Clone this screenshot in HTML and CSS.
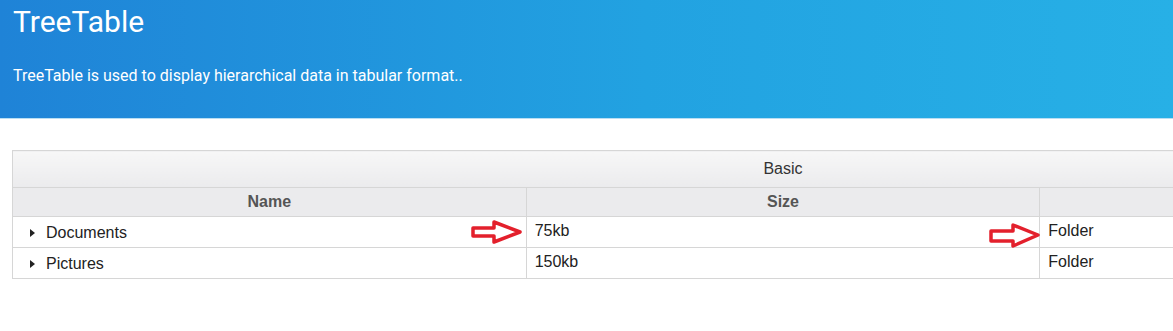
FILE: index.html
```html
<!DOCTYPE html>
<html lang="en">
<head>
    <meta charset="UTF-8">
    <meta name="viewport" content="width=device-width, initial-scale=1.0">
    <title>TreeTable</title>
    <link rel="stylesheet" href="styles.css">
</head>
<body>
    <div class="banner">
        <h1>TreeTable</h1>
        <p>TreeTable is used to display hierarchical data in tabular format..</p>
    </div>

    <div class="content">
        <div class="table-wrap">
            <table class="tree-table">
                <thead>
                    <tr class="group-row">
                        <th colspan="3">Basic</th>
                    </tr>
                    <tr class="column-row">
                        <th>Name</th>
                        <th>Size</th>
                        <th></th>
                    </tr>
                </thead>
                <tbody>
                    <tr>
                        <td class="name"><span class="toggler"></span>Documents</td>
                        <td>75kb</td>
                        <td>Folder</td>
                    </tr>
                    <tr>
                        <td class="name"><span class="toggler"></span>Pictures</td>
                        <td>150kb</td>
                        <td>Folder</td>
                    </tr>
                </tbody>
            </table>

            <!-- annotation arrows -->
            <svg class="arrow arrow-size" width="52" height="24" viewBox="0 0 52 24">
                <polygon points="2,8 23,8 23,2 49,12 23,22 23,16 2,16" />
            </svg>
            <svg class="arrow arrow-type" width="52" height="26" viewBox="0 0 52 26">
                <polygon points="2,8 24,8 24,2 49,12 24,23 24,18 2,18" />
            </svg>
        </div>
    </div>
</body>
</html>
```

FILE: styles.css
```css
body {
    margin: 0;
    font-family: "Liberation Sans", Arial, sans-serif;
    font-size: 16px;
    color: #222;
    background: #fff;
    overflow: hidden;
}

.banner {
    height: 119px;
    box-sizing: border-box;
    padding: 4px 13px 0;
    background: linear-gradient(to right, #1f83d7 0%, #22a2e1 55%, #27b0e6 100%);
    border-bottom: 1px solid #b9def3;
    color: #fff;
    font-family: Roboto, "Liberation Sans", sans-serif;
}

.banner h1 {
    margin: 0;
    font-size: 30px;
    font-weight: 400;
    line-height: 36px;
}

.banner p {
    margin: 26px 0 0;
    font-size: 16px;
    line-height: 20px;
}

.content {
    padding: 31px 0 0 12px;
}

.table-wrap {
    position: relative;
}

.tree-table {
    width: 1542px;
    table-layout: fixed;
    border-collapse: collapse;
}

.tree-table th,
.tree-table td {
    border: 1px solid #d6d6d6;
}

.group-row th {
    height: 36px;
    padding: 0;
    font-weight: 400;
    color: #333;
    background: linear-gradient(to bottom, #f7f7f7, #ebebed);
}

.column-row th {
    height: 28px;
    padding: 0;
    font-weight: 700;
    color: #555;
    background: #ebebed;
}

.tree-table td {
    height: 28px;
    padding: 0 0 2px 8px;
}

.tree-table td.name {
    padding: 2px 0 0 17px;
}

.toggler {
    display: inline-block;
    width: 0;
    height: 0;
    margin: 0 11px 0 0;
    border-top: 4px solid transparent;
    border-bottom: 4px solid transparent;
    border-left: 5px solid #222;
    vertical-align: 1px;
}

.arrow {
    position: absolute;
}

.arrow polygon {
    fill: #fff;
    stroke: #e3202c;
    stroke-width: 3.5;
    stroke-linejoin: round;
}

.arrow-size {
    left: 459px;
    top: 70px;
}

.arrow-type {
    left: 977px;
    top: 73px;
}
```
